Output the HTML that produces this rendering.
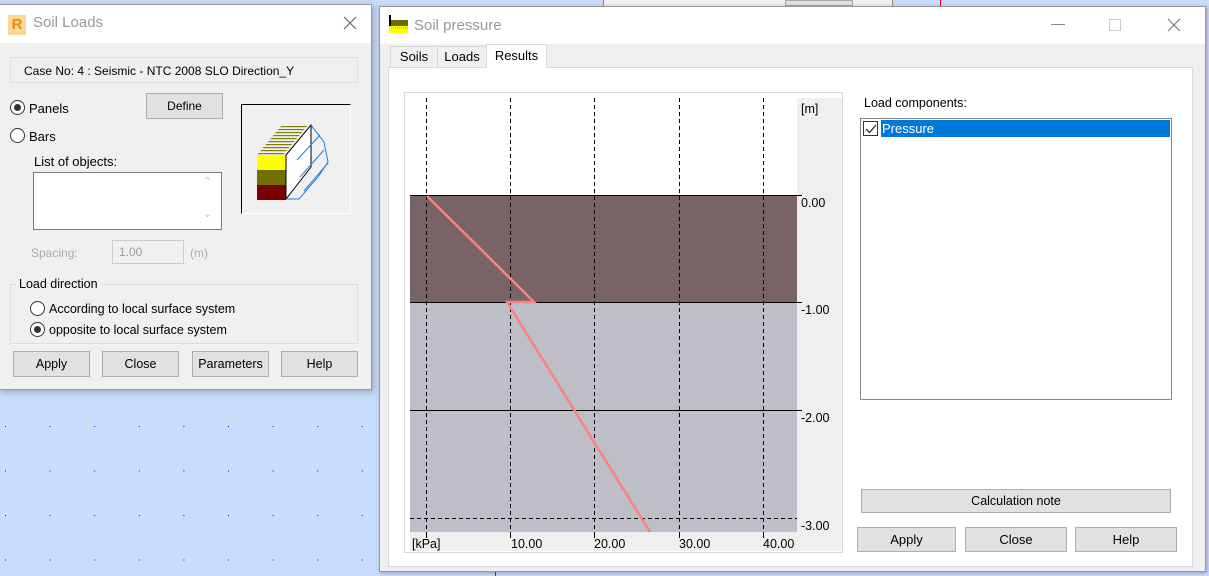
<!DOCTYPE html>
<html><head><meta charset="utf-8"><style>
*{box-sizing:border-box;margin:0;padding:0}
body{width:1209px;height:576px;overflow:hidden;position:relative;background:#cadcfb;font-family:"Liberation Sans",sans-serif;font-size:12px;color:#000}
.abs{position:absolute}
.btn{position:absolute;background:#e1e1e1;border:1px solid #adadad;text-align:center;font-size:13px}
.radio{position:absolute;width:15px;height:15px;border:1px solid #333;border-radius:50%;background:#fff}
.radio.on::after{content:"";position:absolute;left:3px;top:3px;width:7px;height:7px;border-radius:50%;background:#333}
</style></head><body>
<svg class="abs" style="left:0;top:0" width="1209" height="576">
<defs><pattern id="d" x="5" y="25.5" width="44.6" height="44.5" patternUnits="userSpaceOnUse"><rect width="1" height="1" fill="#0000ff"/></pattern></defs>
<rect width="1209" height="576" fill="url(#d)"/>
<line x1="495.5" y1="565" x2="495.5" y2="576" stroke="#e00"/>
<line x1="940.5" y1="0" x2="940.5" y2="6" stroke="#e00"/>
<line x1="673.5" y1="0" x2="673.5" y2="6" stroke="#e00"/>
</svg>
<div class="abs" style="left:603px;top:0;width:290px;height:6px;background:#efefef;border-left:1px solid #888;border-right:1px solid #888"></div>
<div class="abs" style="left:785px;top:0;width:68px;height:6px;background:#e1e1e1;border:1px solid #aaa"></div>

<!-- Soil Loads window -->
<div class="abs" style="left:-1px;top:4px;width:373px;height:386px;background:#f0f0f0;border:1px solid #999;box-shadow:2px 2px 6px rgba(0,0,0,.25)">
 <div class="abs" style="left:0;top:0;width:371px;height:38px;background:#fff"></div>
 <div class="abs" style="left:8px;top:10px;width:18px;height:20px;background:#fbd79a;color:#e89000;font-weight:bold;font-size:15px;text-align:center;line-height:20px">R</div>
 <div class="abs" style="left:33px;top:9px;font-size:15px;color:#999">Soil Loads</div>
</div>
<svg class="abs" style="left:343px;top:16px" width="14" height="14"><path d="M1 1L13 13M13 1L1 13" stroke="#666" stroke-width="1.2"/></svg>
<div class="abs" style="left:10px;top:57px;width:348px;height:26px;border:1px solid #ddd;background:#efefef;padding:6px 13px;font-size:12px">Case No: 4 : Seismic - NTC 2008 SLO Direction_Y</div>
<div class="radio on" style="left:10px;top:100px"></div><div class="abs" style="left:29px;top:101px;font-size:13px">Panels</div>
<div class="radio" style="left:10px;top:128px"></div><div class="abs" style="left:29px;top:129px;font-size:13px">Bars</div>
<div class="btn" style="left:146px;top:93px;width:77px;height:26px;line-height:24px;font-size:12px">Define</div>
<div class="abs" style="left:241px;top:104px;width:110px;height:110px;border:1px solid #000;border-right-color:#fff;border-bottom-color:#fff;background:#f0f0f0">
<svg width="108" height="108" style="position:absolute;left:0;top:0">
 <defs><pattern id="h" width="40" height="3" patternUnits="userSpaceOnUse"><rect width="40" height="1.2" fill="#808000"/></pattern></defs>
 <path d="M15 50 L40 20 L66 20 L41 50 Z" fill="url(#h)"/>
 <rect x="15" y="50" width="29" height="15" fill="#ffff00"/>
 <rect x="15" y="65" width="29" height="15" fill="#707000"/>
 <rect x="15" y="80" width="29" height="15" fill="#7a0000"/>
 <path d="M44 50 L69 20 L69 62 L44 94 Z" fill="#fff" stroke="#000"/>
 <path d="M69 20 L82 37 L86 57 L76 72 L57 94 L44 94" fill="none" stroke="#2080e0"/>
 <path d="M55 55 L78 30 M58 72 L82 45 M62 86 L86 58" stroke="#2080e0" fill="none"/>
</svg></div>
<div class="abs" style="left:34px;top:154px;font-size:13px">List of objects:</div>
<div class="abs" style="left:33px;top:172px;width:189px;height:58px;background:#fff;border:1px solid #7a7a7a"></div>
<div class="abs" style="left:203px;top:175px;color:#bbb;font-size:11px">⌃</div>
<div class="abs" style="left:203px;top:207px;color:#bbb;font-size:11px">⌄</div>
<div class="abs" style="left:31px;top:246px;color:#aaa">Spacing:</div>
<div class="abs" style="left:112px;top:240px;width:72px;height:24px;border:1px solid #ccc;background:#f0f0f0;color:#999;padding:4px 6px">1.00</div>
<div class="abs" style="left:190px;top:246px;color:#aaa">(m)</div>
<div class="abs" style="left:10px;top:284px;width:348px;height:60px;border:1px solid #dcdcdc"></div>
<div class="abs" style="left:16px;top:277px;background:#f0f0f0;padding:0 3px;font-size:12.5px">Load direction</div>
<div class="radio" style="left:30px;top:301px"></div><div class="abs" style="left:49px;top:302px;font-size:12.5px">According to local surface system</div>
<div class="radio on" style="left:30px;top:322px"></div><div class="abs" style="left:49px;top:323px;font-size:12.5px">opposite to local surface system</div>
<div class="btn" style="left:13px;top:351px;width:77px;height:26px;line-height:24px;font-size:12.5px">Apply</div>
<div class="btn" style="left:102px;top:351px;width:77px;height:26px;line-height:24px;font-size:12.5px">Close</div>
<div class="btn" style="left:192px;top:351px;width:77px;height:26px;line-height:24px;font-size:12.5px">Parameters</div>
<div class="btn" style="left:281px;top:351px;width:77px;height:26px;line-height:24px;font-size:12.5px">Help</div>

<!-- Soil pressure window -->
<div class="abs" style="left:379px;top:6px;width:827px;height:566px;background:#efefef;border:1px solid #999;box-shadow:1px 1px 4px rgba(0,0,0,.3)"></div>
<div class="abs" style="left:380px;top:7px;width:825px;height:37px;background:#fff"></div>
<svg class="abs" style="left:389px;top:15px" width="20" height="20">
 <rect x="0" y="0" width="2" height="16" fill="#000"/>
 <rect x="2" y="5" width="17" height="6" fill="#6a6a00"/>
 <rect x="0" y="11" width="19" height="7" fill="#ff0"/>
 <line x1="2" y1="13" x2="19" y2="13" stroke="#999" stroke-dasharray="1,1"/>
</svg>
<div class="abs" style="left:414px;top:17px;font-size:15px;color:#999">Soil pressure</div>
<div class="abs" style="left:1051px;top:24px;width:14px;height:1px;background:#888"></div>
<div class="abs" style="left:1109px;top:19px;width:12px;height:12px;border:1px solid #ccc"></div>
<svg class="abs" style="left:1167px;top:18px" width="14" height="14"><path d="M1 1L13 13M13 1L1 13" stroke="#777" stroke-width="1.1"/></svg>
<div class="abs" style="left:390px;top:46px;width:48px;height:22px;border:1px solid #d9d9d9;background:#f0f0f0;font-size:13px;text-align:center;line-height:20px">Soils</div>
<div class="abs" style="left:437px;top:46px;width:50px;height:22px;border:1px solid #d9d9d9;background:#f0f0f0;font-size:13px;text-align:center;line-height:20px">Loads</div>
<div class="abs" style="left:388px;top:67px;width:805px;height:500px;background:#fff;border:1px solid #d9d9d9"></div>
<div class="abs" style="left:486px;top:44px;width:61px;height:24px;border:1px solid #d9d9d9;border-bottom:none;background:#fff;font-size:13px;text-align:center;line-height:21px">Results</div>
<div class="abs" style="left:404px;top:92px;width:439px;height:461px;border:1px solid #d9d9d9;background:#fff"></div>
<div class="abs" style="left:797px;top:98px;width:45px;height:452px;background:#efefef"></div>
<div class="abs" style="left:410px;top:532px;width:432px;height:19px;background:#efefef"></div>
<div class="abs" style="left:410px;top:195px;width:387px;height:107px;background:#786464"></div>
<div class="abs" style="left:410px;top:302px;width:387px;height:230px;background:#bebec8"></div>
<svg class="abs" style="left:0;top:0" width="1209" height="576">
 <g stroke="#000" stroke-dasharray="4,3">
  <line x1="426.5" y1="98" x2="426.5" y2="532"/><line x1="510.5" y1="98" x2="510.5" y2="532"/>
  <line x1="594.5" y1="98" x2="594.5" y2="532"/><line x1="679.5" y1="98" x2="679.5" y2="532"/>
  <line x1="763.5" y1="98" x2="763.5" y2="532"/>
  <line x1="410" y1="518.5" x2="797" y2="518.5"/>
 </g>
 <g stroke="#000">
  <line x1="410" y1="195.5" x2="802" y2="195.5"/><line x1="410" y1="302.5" x2="802" y2="302.5"/>
  <line x1="410" y1="410.5" x2="802" y2="410.5"/>
  <line x1="426.5" y1="532" x2="426.5" y2="538"/><line x1="510.5" y1="532" x2="510.5" y2="538"/>
  <line x1="594.5" y1="532" x2="594.5" y2="538"/><line x1="679.5" y1="532" x2="679.5" y2="538"/>
  <line x1="763.5" y1="532" x2="763.5" y2="538"/>
 </g>
 <polyline points="427,196 534,302 507,302 650,532" fill="none" stroke="#ff8080" stroke-width="2.5"/>
</svg>
<div class="abs" style="left:801px;top:102px;font-size:12.5px">[m]</div>
<div class="abs" style="left:801px;top:196px;font-size:12.5px">0.00</div>
<div class="abs" style="left:801px;top:303px;font-size:12.5px">-1.00</div>
<div class="abs" style="left:801px;top:411px;font-size:12.5px">-2.00</div>
<div class="abs" style="left:801px;top:519px;font-size:12.5px">-3.00</div>
<div class="abs" style="left:412px;top:537px;font-size:12.5px">[kPa]</div>
<div class="abs" style="left:511px;top:537px;font-size:12.5px">10.00</div>
<div class="abs" style="left:594px;top:537px;font-size:12.5px">20.00</div>
<div class="abs" style="left:679px;top:537px;font-size:12.5px">30.00</div>
<div class="abs" style="left:763px;top:537px;font-size:12.5px">40.00</div>
<div class="abs" style="left:864px;top:96px;font-size:12.5px">Load components:</div>
<div class="abs" style="left:860px;top:118px;width:312px;height:282px;border:1px solid #828790;background:#fff"></div>
<div class="abs" style="left:863px;top:121px;width:15px;height:15px;border:1px solid #333;background:#fff"></div>
<svg class="abs" style="left:865px;top:123px" width="12" height="12"><path d="M1 6L4.5 9.5L11 2" stroke="#333" stroke-width="1.3" fill="none"/></svg>
<div class="abs" style="left:881px;top:120px;width:289px;height:17px;background:#0078d7;color:#fff;font-size:13px;padding-left:1px;line-height:17px">Pressure</div>
<div class="btn" style="left:861px;top:489px;width:310px;height:24px;line-height:22px;font-size:12.5px">Calculation note</div>
<div class="btn" style="left:857px;top:527px;width:99px;height:25px;line-height:23px">Apply</div>
<div class="btn" style="left:965px;top:527px;width:102px;height:25px;line-height:23px">Close</div>
<div class="btn" style="left:1075px;top:527px;width:102px;height:25px;line-height:23px">Help</div>
</body></html>
